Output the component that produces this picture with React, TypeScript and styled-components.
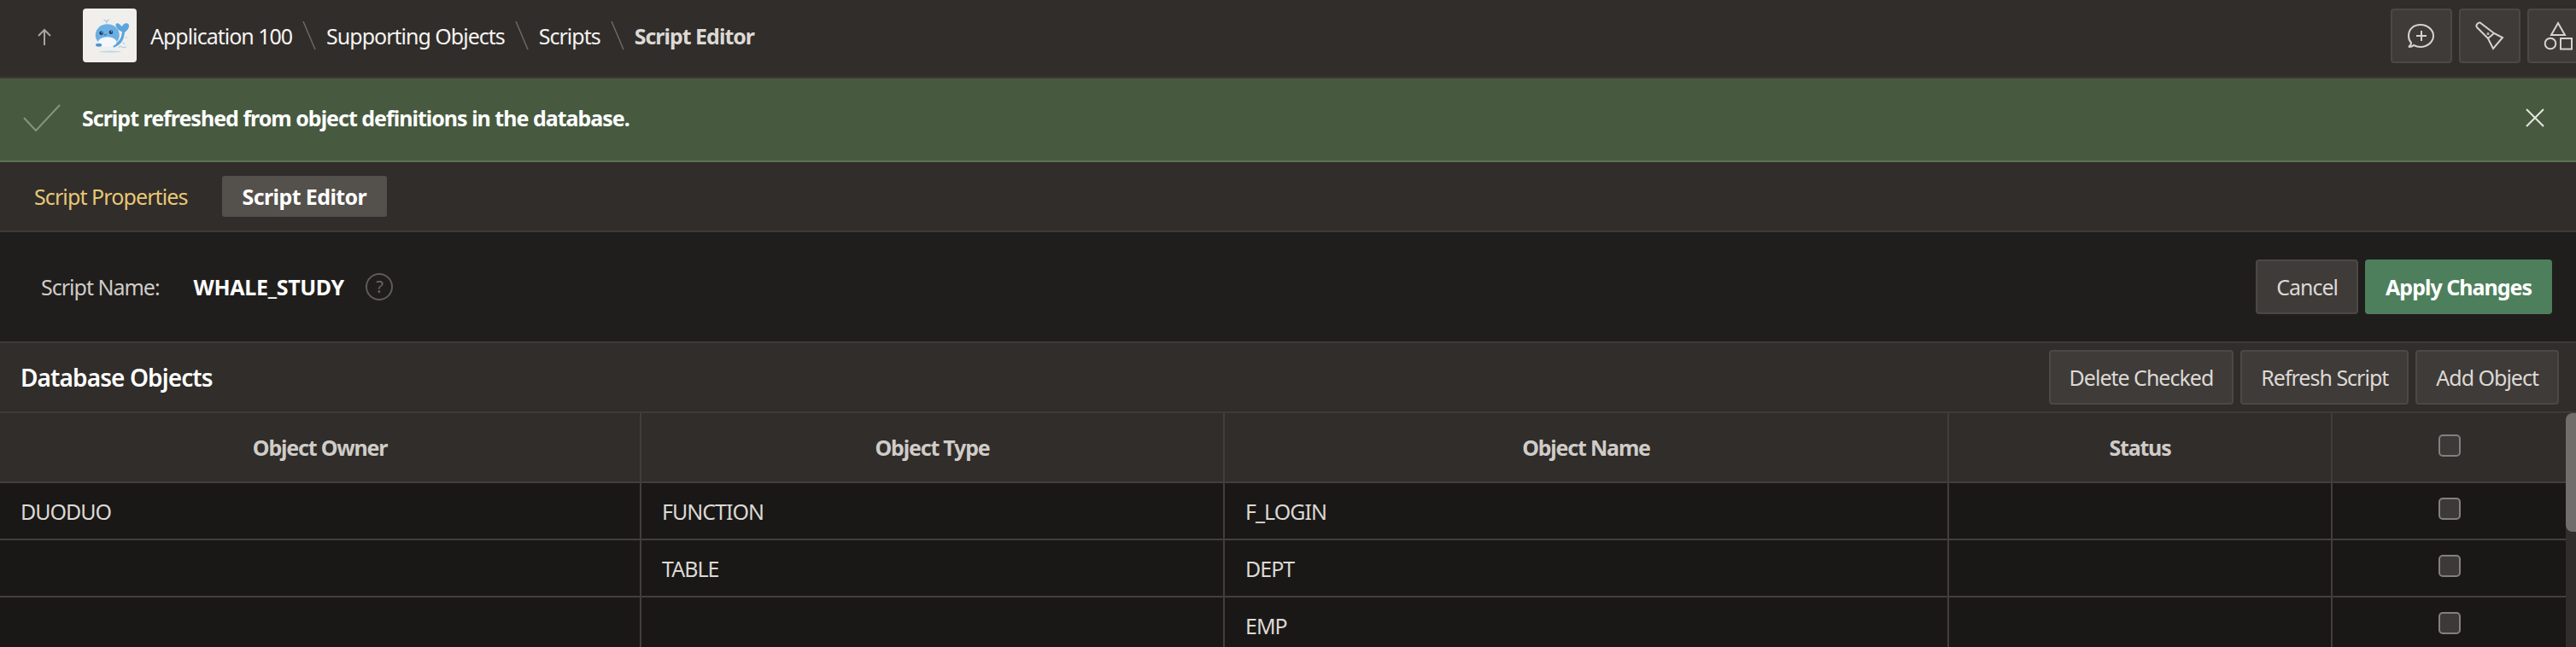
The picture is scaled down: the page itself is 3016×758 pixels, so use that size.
import styled, { createGlobalStyle } from 'styled-components';

const GlobalStyle = createGlobalStyle`
  html, body {
    margin: 0;
    padding: 0;
    height: 100%;
    overflow: hidden;
    background: #1a1816;
  }
  body {
    font-family: 'Noto Sans', 'Open Sans', sans-serif;
    font-size: 25px;
    letter-spacing: -1px;
  }
  * {
    box-sizing: border-box;
  }
`;

const objects = [
  { owner: 'DUODUO', type: 'FUNCTION', name: 'F_LOGIN' },
  { owner: '', type: 'TABLE', name: 'DEPT' },
  { owner: '', type: '', name: 'EMP' },
];

function WhaleLogo() {
  return (
    <svg width='62' height='62' viewBox='80 30 190 190'>
      <ellipse cx='175' cy='182' rx='40' ry='3' fill='#b9d6ec' />
      <ellipse cx='165' cy='122' rx='43' ry='39' fill='#6bb0e3' />
      <path
        d='M185 156q30-8 33-46c-10-2-22-12-23-24-1-7 7-8 12-4 4 3 7 6 10 9 3-6 10-13 18-11 8 1 9 10 6 17-3 8-10 12-14 16-2 26-14 47-40 54z'
        fill='#5ca5dd'
      />
      <ellipse cx='165' cy='147' rx='33' ry='18' fill='#f5f8fb' />
      <ellipse cx='134' cy='158' rx='11' ry='6' fill='#4c92d2' />
      <circle cx='143' cy='115' r='7' fill='#1e3a66' />
      <circle cx='178' cy='112' r='7' fill='#1e3a66' />
      <circle cx='145' cy='113' r='2' fill='#fff' />
      <circle cx='180' cy='110' r='2' fill='#fff' />
      <path d='M152 120q5 5 10 0' stroke='#1e3a66' strokeWidth='2' fill='none' />
      <path
        d='M162 80v-8M162 74q-4-7-10-6M162 74q4-7 10-6'
        stroke='#7dbce8'
        strokeWidth='3'
        fill='none'
      />
      <path
        d='M205 166q10-6 14 0q8 4 14-2M222 148l4 8M232 128l2 6'
        stroke='#6bb0e3'
        strokeWidth='2'
        fill='none'
      />
    </svg>
  );
}

function CrumbDivider() {
  return (
    <svg width='16' height='34' viewBox='0 0 16 34'>
      <path d='M1 0l14 33' stroke='#6d6965' strokeWidth='1.5' />
    </svg>
  );
}

function ChatIcon() {
  return (
    <IconSvg width='34' height='30' viewBox='0 0 34 30'>
      <path d='M2 28c3 0 5-1 6-2 2 1 5 2 8 2 8 0 15-6 15-13S24 2 16 2 2 7 2 15c0 3 1 6 3 8 0 2-1 4-3 5z' />
      <path d='M17 9v12M11 15h12' />
    </IconSvg>
  );
}

function TorchIcon() {
  return (
    <IconSvg width='34' height='34' viewBox='0 0 34 34'>
      <path d='M15 20L2.500 7.500c-2-2-1-3.500 0-4.500s2.500-2.500 4.500-.5L22 14l10 5-11 13zM22 14l-7 6' />
      <circle cx='15' cy='14.500' r='0.5' />
    </IconSvg>
  );
}

function ShapesIcon() {
  return (
    <IconSvg width='34' height='34' viewBox='0 0 34 34'>
      <path d='M17 2l8 14H9z' />
      <circle cx='8' cy='26' r='6.300' />
      <rect x='20' y='20' width='13' height='12.500' />
    </IconSvg>
  );
}

function App() {
  return (
    <>
      <GlobalStyle />
      <Page>
        <TopBar>
          <UpArrow width='22' height='20' viewBox='0 0 22 20'>
            <path d='M11 20V2M4 9l7-7 7 7' />
          </UpArrow>
          <Logo>
            <WhaleLogo />
          </Logo>
          <Breadcrumb>
            <Crumb>Application 100</Crumb>
            <CrumbDivider />
            <Crumb>Supporting Objects</Crumb>
            <CrumbDivider />
            <Crumb>Scripts</Crumb>
            <CrumbDivider />
            <Crumb $current>Script Editor</Crumb>
          </Breadcrumb>
          <TopActions>
            <IconButton>
              <ChatIcon />
            </IconButton>
            <IconButton>
              <TorchIcon />
            </IconButton>
            <IconButton>
              <ShapesIcon />
            </IconButton>
          </TopActions>
        </TopBar>

        <Banner>
          <CheckMark width='44' height='32' viewBox='0 0 44 32'>
            <path d='M1 16l14 15L43 1' />
          </CheckMark>
          <BannerText>Script refreshed from object definitions in the database.</BannerText>
          <CloseMark width='22' height='22' viewBox='0 0 22 22'>
            <path d='M1 1l20 20M21 1L1 21' />
          </CloseMark>
        </Banner>

        <Tabs>
          <TabLink>Script Properties</TabLink>
          <ActiveTab>Script Editor</ActiveTab>
        </Tabs>

        <FormRow>
          <FieldLabel>Script Name:</FieldLabel>
          <FieldValue>WHALE_STUDY</FieldValue>
          <HelpBadge>?</HelpBadge>
          <FormActions>
            <Button>Cancel</Button>
            <PrimaryButton>Apply Changes</PrimaryButton>
          </FormActions>
        </FormRow>

        <RegionHeader>
          <RegionTitle>Database Objects</RegionTitle>
          <RegionActions>
            <Button>Delete Checked</Button>
            <Button>Refresh Script</Button>
            <Button>Add Object</Button>
          </RegionActions>
        </RegionHeader>

        <TableWrap>
          <Table>
            <colgroup>
              <col style={{ width: 751 }} />
              <col style={{ width: 683 }} />
              <col style={{ width: 848 }} />
              <col style={{ width: 449 }} />
              <col />
            </colgroup>
            <thead>
              <tr>
                <HeadCell>Object Owner</HeadCell>
                <HeadCell>Object Type</HeadCell>
                <HeadCell>Object Name</HeadCell>
                <HeadCell>Status</HeadCell>
                <HeadCell>
                  <Check />
                </HeadCell>
              </tr>
            </thead>
            <tbody>
              {objects.map((row) => (
                <tr key={row.name}>
                  <BodyCell>{row.owner}</BodyCell>
                  <BodyCell>{row.type}</BodyCell>
                  <BodyCell>{row.name}</BodyCell>
                  <BodyCell />
                  <BodyCell $center>
                    <Check />
                  </BodyCell>
                </tr>
              ))}
            </tbody>
          </Table>
          <ScrollTrack>
            <ScrollThumb />
          </ScrollTrack>
        </TableWrap>
      </Page>
    </>
  );
}

export default App;

const Page = styled.div`
  width: 3016px;
  height: 758px;
  overflow: hidden;
  background: #1a1816;
  color: #f5f4f2;
`;

const TopBar = styled.header`
  height: 92px;
  padding: 10px 0 0 41px;
  display: flex;
  align-items: flex-start;
  background: #312d2a;
  border-bottom: 2px solid #3e3a37;
`;

const UpArrow = styled.svg`
  margin-top: 23px;
  fill: none;
  stroke: #a8a49f;
  stroke-width: 2;
`;

const Logo = styled.div`
  width: 63px;
  height: 63px;
  margin-left: 34px;
  border-radius: 4px;
  background: #f1efeb;
  display: flex;
  align-items: center;
  justify-content: center;
`;

const Breadcrumb = styled.nav`
  height: 63px;
  margin-left: 16px;
  display: flex;
  align-items: center;
  gap: 12px;
`;

const Crumb = styled.span<{ $current?: boolean }>`
  font-weight: ${(p) => (p.$current ? 700 : 400)};
  color: ${(p) => (p.$current ? '#dcd9d5' : '#f5f4f2')};
`;

const TopActions = styled.div`
  margin-left: auto;
  margin-right: -15px;
  display: flex;
  gap: 8px;
`;

const IconButton = styled.button`
  width: 72px;
  height: 64px;
  padding: 0;
  border: 2px solid #4c4845;
  border-radius: 4px;
  background: #3f3b38;
  display: flex;
  align-items: center;
  justify-content: center;
`;

const IconSvg = styled.svg`
  fill: none;
  stroke: #d6d3cf;
  stroke-width: 2;
`;

const Banner = styled.div`
  height: 98px;
  padding: 0 37px 4px 27px;
  display: flex;
  align-items: center;
  background: #475a40;
  border-bottom: 2px solid #5d7256;
`;

const CheckMark = styled.svg`
  flex: none;
  fill: none;
  stroke: #7f9a72;
  stroke-width: 2;
`;

const BannerText = styled.div`
  margin-left: 25px;
  font-weight: 700;
  color: #ffffff;
`;

const CloseMark = styled.svg`
  margin-left: auto;
  fill: none;
  stroke: #e4e6e0;
  stroke-width: 2;
`;

const Tabs = styled.nav`
  height: 82px;
  padding: 16px 0 0 40px;
  display: flex;
  align-items: flex-start;
  gap: 40px;
  background: #312d2a;
  border-bottom: 2px solid #3e3a37;
`;

const TabLink = styled.a`
  line-height: 48px;
  letter-spacing: -0.9px;
  color: #e8c778;
`;

const ActiveTab = styled.a`
  height: 48px;
  padding: 0 24px;
  line-height: 48px;
  font-weight: 700;
  letter-spacing: -0.6px;
  border-radius: 3px;
  background: #54504c;
  color: #ffffff;
`;

const FormRow = styled.div`
  height: 130px;
  padding: 0 28px 0 48px;
  display: flex;
  align-items: center;
  background: #201e1c;
  border-bottom: 2px solid #3e3a37;
`;

const FieldLabel = styled.label`
  color: #cfccc8;
`;

const FieldValue = styled.span`
  margin-left: 40px;
  font-weight: 700;
  letter-spacing: -0.3px;
  color: #ffffff;
`;

const HelpBadge = styled.span`
  width: 32px;
  height: 32px;
  margin-left: 25px;
  border: 2px solid #5f5b58;
  border-radius: 50%;
  font-size: 20px;
  line-height: 28px;
  text-align: center;
  color: #6d6965;
`;

const FormActions = styled.div`
  margin-left: auto;
  display: flex;
  gap: 8px;
`;

const Button = styled.button`
  height: 64px;
  padding: 0 22px;
  border: 2px solid #4c4845;
  border-radius: 4px;
  background: #3f3b38;
  font: inherit;
  letter-spacing: inherit;
  color: #dcd9d5;
`;

const PrimaryButton = styled(Button)`
  border-color: #4d7f5c;
  background: #4d7f5c;
  font-weight: 700;
  color: #ffffff;
`;

const RegionHeader = styled.div`
  height: 82px;
  padding: 8px 20px 0 24px;
  display: flex;
  align-items: flex-start;
  justify-content: space-between;
  background: #312d2a;
  border-bottom: 2px solid #3e3a37;
`;

const RegionTitle = styled.h2`
  margin: 0;
  line-height: 64px;
  font-size: 28px;
  font-weight: 600;
  letter-spacing: -0.9px;
  color: #ffffff;
`;

const RegionActions = styled.div`
  display: flex;
  gap: 8px;
`;

const TableWrap = styled.div`
  display: flex;
  align-items: flex-start;
`;

const Table = styled.table`
  width: 3004px;
  flex: none;
  table-layout: fixed;
  border-collapse: separate;
  border-spacing: 0;
`;

const HeadCell = styled.th`
  height: 82px;
  padding: 0;
  vertical-align: middle;
  text-align: center;
  font-weight: 700;
  letter-spacing: -1.2px;
  color: #cfccc8;
  background: #312d2a;
  border-right: 2px solid #423e3b;
  border-bottom: 2px solid #423e3b;
  &:last-child {
    border-right: 0;
  }
`;

const BodyCell = styled.td<{ $center?: boolean }>`
  height: 67px;
  padding: 0 24px;
  text-align: ${(p) => (p.$center ? 'center' : 'left')};
  color: #dcd9d5;
  background: #1a1816;
  border-right: 2px solid #423e3b;
  border-bottom: 2px solid #423e3b;
  &:last-child {
    border-right: 0;
  }
`;

const Check = styled.span`
  display: inline-block;
  width: 26px;
  height: 26px;
  margin-bottom: 8px;
  border: 2px solid #837f7b;
  border-radius: 5px;
  background: #3c3a38;
  vertical-align: middle;
`;

const ScrollTrack = styled.div`
  flex: 1;
  height: 274px;
  background: #312d2a;
`;

const ScrollThumb = styled.div`
  height: 139px;
  border-radius: 8px 0 0 8px;
  background: #706d6a;
`;
